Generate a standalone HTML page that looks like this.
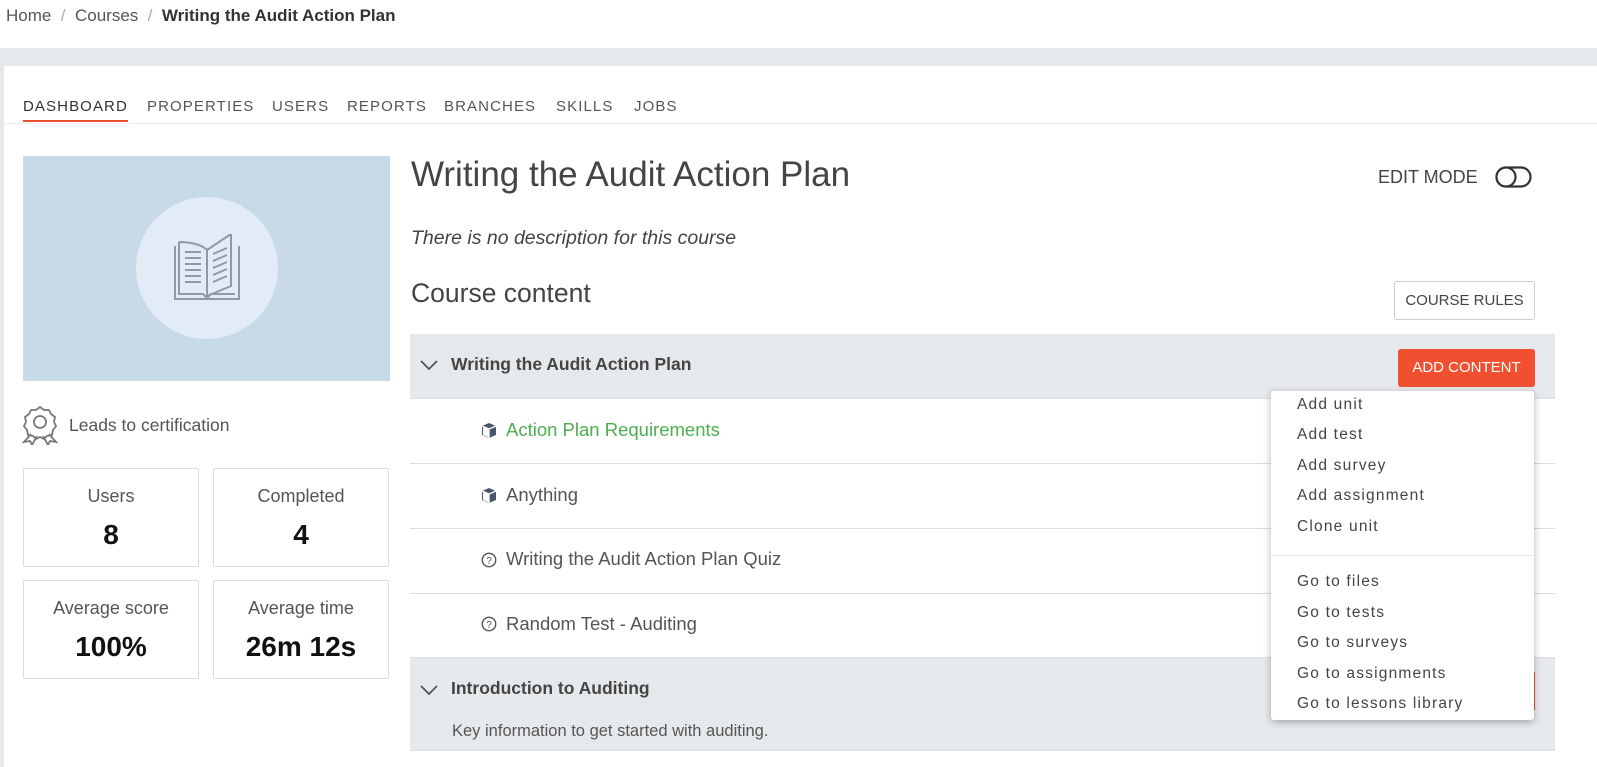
<!DOCTYPE html>
<html><head><meta charset="utf-8"><style>
*{box-sizing:border-box;margin:0;padding:0}
body{width:1597px;height:767px;overflow:hidden;background:#fff;font-family:"Liberation Sans",sans-serif;color:#444;position:relative}
.a{position:absolute;white-space:nowrap}
.bg{position:absolute;left:0;top:48px;width:1597px;height:719px;background:#e6e9ec}
.card{position:absolute;left:4px;top:66px;width:1593px;height:701px;background:#fff}
.tab{position:absolute;top:98px;font-size:15px;letter-spacing:1.1px;color:#555}
.stat{position:absolute;border:1px solid #ddd;border-radius:2px;width:176px;height:99px;text-align:center}
.stat .l{margin-top:17px;font-size:18px;color:#555}
.stat .v{margin-top:12px;font-size:28px;font-weight:bold;color:#111}
.row{position:absolute;left:410px;width:1145px;border-bottom:1.5px solid #ddd;background:#fff}
.row.g{background:#e6e9ec}
.it{position:absolute;left:72px;font-size:18.5px;color:#555}
.menu{position:absolute;left:1271px;top:391px;width:263px;height:329px;background:#fff;border-radius:3px;box-shadow:0 2px 8px rgba(0,0,0,.3)}
.menu div{position:absolute;left:26px;font-size:15.5px;letter-spacing:1.2px;color:#444}
</style></head><body>
<div class="a" style="left:6px;top:6px;font-size:17px;color:#555">Home <span style="color:#aaa">&nbsp;/&nbsp;</span> Courses <span style="color:#aaa">&nbsp;/&nbsp;</span> <b style="color:#333">Writing the Audit Action Plan</b></div>
<div class="bg"></div>
<div class="card"></div>
<div class="tab" style="left:23px;color:#333">DASHBOARD</div>
<div class="a" style="left:23px;top:120px;width:105px;height:2px;background:#f04f30"></div>
<div class="tab" style="left:147px">PROPERTIES</div>
<div class="tab" style="left:272px">USERS</div>
<div class="tab" style="left:347px">REPORTS</div>
<div class="tab" style="left:444px">BRANCHES</div>
<div class="tab" style="left:556px">SKILLS</div>
<div class="tab" style="left:634px">JOBS</div>
<div class="a" style="left:4px;top:123px;width:1593px;height:1px;background:#eee"></div>

<div class="a" style="left:23px;top:156px;width:367px;height:225px;background:#c8dae8"></div>
<div class="a" style="left:136px;top:197px;width:142px;height:142px;border-radius:50%;background:#e1ecf6"></div>
<svg class="a" style="left:171px;top:234px" width="72" height="68" viewBox="0 0 72 68" fill="none" stroke="#8f9aa5" stroke-width="2">
<path d="M4 12v53h64V12"/><path d="M8 8v52h24l4 4 4-4h24"/><path d="M36 64V16C30 10 18 8 8 8"/><path d="M36 16l24-16v52l-24 10"/>
<path d="M14 18h16M14 24h16M14 30h16M14 36h16M14 42h16M14 48h16M42 20l14-6M42 27l14-6M42 34l14-6M42 41l14-6M42 48l14-6"/>
</svg>
<svg class="a" style="left:22px;top:405px" width="36" height="40" viewBox="0 0 36 40" fill="none" stroke="#777" stroke-width="1.8">
<path d="M18 2l4 3 5 0 2 4 4 3-1 5 2 4-3 4-1 5-5 1-3 3-4-2-4 2-3-3-5-1-1-5-3-4 2-4-1-5 4-3 2-4 5 0z"/><circle cx="18" cy="17" r="6"/>
<path d="M9 29l-7 8 6-1 2 4 5-9M27 29l7 8-6-1-2 4-5-9"/>
</svg>
<div class="a" style="left:69px;top:415px;font-size:17.5px;color:#555">Leads to certification</div>

<div class="stat" style="left:23px;top:468px"><div class="l">Users</div><div class="v">8</div></div>
<div class="stat" style="left:213px;top:468px"><div class="l">Completed</div><div class="v">4</div></div>
<div class="stat" style="left:23px;top:580px"><div class="l">Average score</div><div class="v">100%</div></div>
<div class="stat" style="left:213px;top:580px"><div class="l">Average time</div><div class="v">26m 12s</div></div>

<div class="a" style="left:411px;top:155px;font-size:35px;color:#444">Writing the Audit Action Plan</div>
<div class="a" style="left:1378px;top:167px;font-size:18px;color:#444">EDIT MODE</div>
<svg class="a" style="left:1495px;top:166px" width="38" height="22"><rect x="1.5" y="1.5" width="34" height="19" rx="9.5" fill="none" stroke="#333" stroke-width="2.2"/><circle cx="11" cy="11" r="9.5" fill="#fff" stroke="#333" stroke-width="2.2"/></svg>
<div class="a" style="left:411px;top:227px;font-size:19.5px;font-style:italic;color:#444">There is no description for this course</div>
<div class="a" style="left:411px;top:278px;font-size:26.5px;color:#444">Course content</div>
<div class="a" style="left:1394px;top:281px;width:141px;height:39px;border:1px solid #ccc;border-radius:3px;font-size:15px;color:#444;text-align:center;line-height:37px">COURSE RULES</div>

<div class="row g" style="top:334px;height:65px"><svg class="a" style="left:10px;top:25px" width="18" height="12"><path d="M1 2l8 8 8-8" fill="none" stroke="#555" stroke-width="1.8"/></svg><div class="a" style="left:41px;top:20px;font-size:17.5px;font-weight:bold;color:#444">Writing the Audit Action Plan</div>
<div class="a" style="left:988px;top:15px;width:137px;height:38px;background:#f04f30;border-radius:3px;color:#fff;font-size:15px;text-align:center;line-height:38px">ADD CONTENT</div></div>
<div class="row" style="top:399px;height:65px"><svg class="a" style="left:71px;top:23px" width="16" height="17" viewBox="0 0 16 17"><path d="M8 1l7 3v9l-7 3-7-3V4z" fill="#4a5570"/><path d="M1 4l7 3 7-3" fill="none" stroke="#fff" stroke-width="1.3"/><path d="M8 7v9" stroke="#fff" stroke-width="1.3"/><path d="M2 5l6 2.5v8L2 13z" fill="#fff"/></svg><div class="it" style="left:96px;top:20px;color:#4caf50">Action Plan Requirements</div></div>
<div class="row" style="top:464px;height:65px"><svg class="a" style="left:71px;top:23px" width="16" height="17" viewBox="0 0 16 17"><path d="M8 1l7 3v9l-7 3-7-3V4z" fill="#4a5570"/><path d="M1 4l7 3 7-3" fill="none" stroke="#fff" stroke-width="1.3"/><path d="M8 7v9" stroke="#fff" stroke-width="1.3"/><path d="M2 5l6 2.5v8L2 13z" fill="#fff"/></svg><div class="it" style="left:96px;top:20px">Anything</div></div>
<div class="row" style="top:529px;height:65px"><svg class="a" style="left:71px;top:23px" width="16" height="16"><circle cx="8" cy="8" r="6.7" fill="none" stroke="#555" stroke-width="1.4"/><text x="8" y="12" font-size="10" text-anchor="middle" fill="#555" font-family="Liberation Sans">?</text></svg><div class="it" style="left:96px;top:19px">Writing the Audit Action Plan Quiz</div></div>
<div class="row" style="top:594px;height:64px"><svg class="a" style="left:71px;top:22px" width="16" height="16"><circle cx="8" cy="8" r="6.7" fill="none" stroke="#555" stroke-width="1.4"/><text x="8" y="12" font-size="10" text-anchor="middle" fill="#555" font-family="Liberation Sans">?</text></svg><div class="it" style="left:96px;top:19px">Random Test - Auditing</div></div>
<div class="row g" style="top:658px;height:93px"><svg class="a" style="left:10px;top:26px" width="18" height="12"><path d="M1 2l8 8 8-8" fill="none" stroke="#555" stroke-width="1.8"/></svg><div class="a" style="left:41px;top:20px;font-size:17.5px;font-weight:bold;color:#444">Introduction to Auditing</div><div class="a" style="left:42px;top:64px;font-size:16.5px;color:#555">Key information to get started with auditing.</div>
<div class="a" style="left:1118px;top:14px;width:7px;height:38px;background:#f04f30"></div></div>

<div class="menu">
<div style="top:5px">Add unit</div><div style="top:35px">Add test</div><div style="top:66px">Add survey</div><div style="top:96px">Add assignment</div><div style="top:127px">Clone unit</div>
<div style="left:0;top:164px;width:263px;height:1px;background:#e5e5e5"></div>
<div style="top:182px">Go to files</div><div style="top:213px">Go to tests</div><div style="top:243px">Go to surveys</div><div style="top:274px">Go to assignments</div><div style="top:304px">Go to lessons library</div>
</div>
</body></html>
